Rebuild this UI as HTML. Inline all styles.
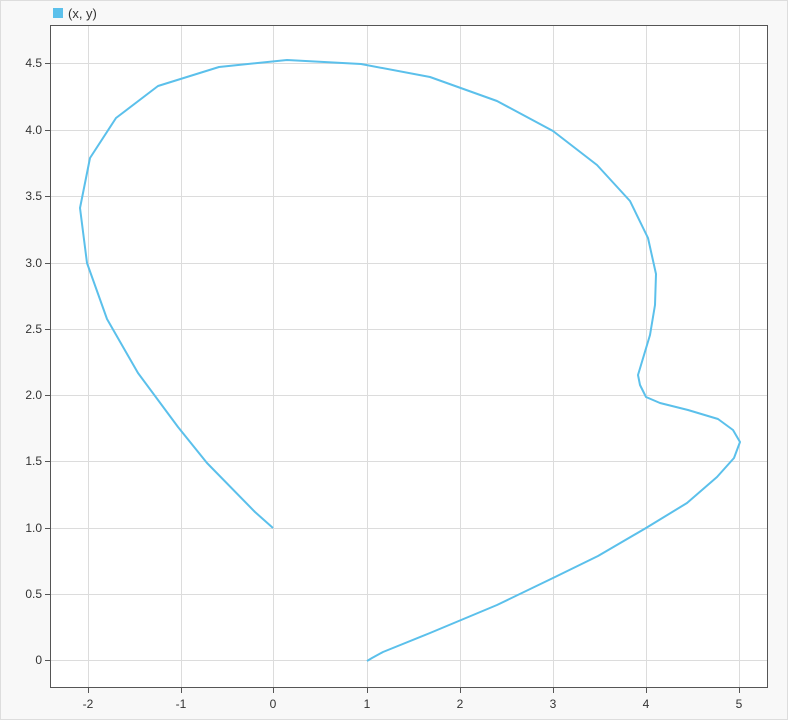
<!DOCTYPE html>
<html><head><meta charset="utf-8"><style>
html,body{margin:0;padding:0;background:#fff}
svg{display:block}
text{font-family:"Liberation Sans",sans-serif;font-size:12px;fill:#333}
</style></head><body>
<svg width="788" height="720" viewBox="0 0 788 720">
<rect x="0.5" y="0.5" width="787" height="719" fill="#f8f8f8" stroke="#ddd"/>
<rect x="50" y="25" width="718" height="663" fill="#fff"/>
<g stroke="#dcdcdc" stroke-width="1">
<line x1="88.5" y1="25" x2="88.5" y2="688"/>
<line x1="181.5" y1="25" x2="181.5" y2="688"/>
<line x1="273.5" y1="25" x2="273.5" y2="688"/>
<line x1="367.5" y1="25" x2="367.5" y2="688"/>
<line x1="460.5" y1="25" x2="460.5" y2="688"/>
<line x1="553.5" y1="25" x2="553.5" y2="688"/>
<line x1="646.5" y1="25" x2="646.5" y2="688"/>
<line x1="739.5" y1="25" x2="739.5" y2="688"/>
<line x1="50" y1="660.5" x2="768" y2="660.5"/>
<line x1="50" y1="594.5" x2="768" y2="594.5"/>
<line x1="50" y1="528.5" x2="768" y2="528.5"/>
<line x1="50" y1="461.5" x2="768" y2="461.5"/>
<line x1="50" y1="395.5" x2="768" y2="395.5"/>
<line x1="50" y1="329.5" x2="768" y2="329.5"/>
<line x1="50" y1="263.5" x2="768" y2="263.5"/>
<line x1="50" y1="196.5" x2="768" y2="196.5"/>
<line x1="50" y1="130.5" x2="768" y2="130.5"/>
<line x1="50" y1="63.5" x2="768" y2="63.5"/>
</g>
<rect x="50.5" y="25.5" width="717" height="662" fill="none" stroke="#555"/>
<g stroke="#555">
<line x1="88.5" y1="688" x2="88.5" y2="693"/><line x1="181.5" y1="688" x2="181.5" y2="693"/>
<line x1="273.5" y1="688" x2="273.5" y2="693"/><line x1="367.5" y1="688" x2="367.5" y2="693"/>
<line x1="460.5" y1="688" x2="460.5" y2="693"/><line x1="553.5" y1="688" x2="553.5" y2="693"/>
<line x1="646.5" y1="688" x2="646.5" y2="693"/><line x1="739.5" y1="688" x2="739.5" y2="693"/>
<line x1="45" y1="660.5" x2="50" y2="660.5"/><line x1="45" y1="594.5" x2="50" y2="594.5"/>
<line x1="45" y1="528.5" x2="50" y2="528.5"/><line x1="45" y1="461.5" x2="50" y2="461.5"/>
<line x1="45" y1="395.5" x2="50" y2="395.5"/><line x1="45" y1="329.5" x2="50" y2="329.5"/>
<line x1="45" y1="263.5" x2="50" y2="263.5"/><line x1="45" y1="196.5" x2="50" y2="196.5"/>
<line x1="45" y1="130.5" x2="50" y2="130.5"/><line x1="45" y1="63.5" x2="50" y2="63.5"/>
</g>
<g text-anchor="middle">
<text x="88" y="708">-2</text><text x="181" y="708">-1</text><text x="273" y="708">0</text>
<text x="367" y="708">1</text><text x="460" y="708">2</text><text x="553" y="708">3</text>
<text x="646" y="708">4</text><text x="739" y="708">5</text>
</g>
<g text-anchor="end">
<text x="42" y="664">0</text><text x="42" y="598">0.5</text><text x="42" y="532">1.0</text>
<text x="42" y="465">1.5</text><text x="42" y="399">2.0</text><text x="42" y="333">2.5</text>
<text x="42" y="267">3.0</text><text x="42" y="200">3.5</text><text x="42" y="134">4.0</text>
<text x="42" y="67">4.5</text>
</g>
<polyline fill="none" stroke="#5bc0eb" stroke-width="2" stroke-linejoin="round" points="273,528 255,512 207,463 178,427 138,373 107,319 87,263 80,208 90,158 116,118 158,86 219,67 287,60 361,64 430,77 497,101 553,131 597,165 630,201 648,238 656,274 655,305 650,335 644,355 638,375 640,385 646,397 660,403 688,410 718,419 733,430 740,442 734,458 717,477 687,503 646,528 598,556 553,578 497,605 430,633 383,652 372,658 367,661"/>
<rect x="53" y="8" width="10" height="10" fill="#5bc0eb"/>
<text x="68" y="18" style="font-size:13px">(x, y)</text>
</svg>
</body></html>
